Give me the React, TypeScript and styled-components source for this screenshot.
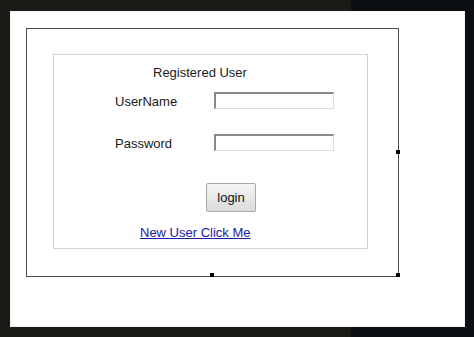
import React from "react";
import styled, { createGlobalStyle } from "styled-components";

const Global = createGlobalStyle`
  html, body { margin: 0; padding: 0; }
  body { font-family: "Liberation Sans", Arial, sans-serif; }
`;

const Screen = styled.div`
  width: 474px;
  height: 337px;
  box-sizing: border-box;
  padding: 11px 9px 10px 10px;
  background: linear-gradient(to right, #1b1b15 0, #1b1b15 351px, #0c0f11 351px, #0c0f11 100%);
  display: flex;
`;

const Panel = styled.div`
  width: 455px;
  height: 316px;
  background: #ffffff;
  box-shadow: inset 0 0 0 1px #f4f4f4;
  padding: 17px 0 0 16px;
  box-sizing: border-box;
`;

const Frame = styled.div`
  position: relative;
  width: 373px;
  height: 249px;
  box-sizing: border-box;
  border: 1px solid #4a4a4a;
  padding: 25px 0 0 26px;
`;

const Handle = styled.span<{ $x: number; $y: number }>`
  position: absolute;
  width: 4px;
  height: 4px;
  background: #000;
  left: ${(p) => p.$x}px;
  top: ${(p) => p.$y}px;
`;

const Box = styled.div`
  width: 315px;
  height: 195px;
  box-sizing: border-box;
  border: 1px solid #d2d2d2;
  display: flex;
  flex-direction: column;
  font-size: 13px;
  line-height: 15px;
  color: #1a1a1a;
`;

const Title = styled.div`
  margin: 10px 0 0 99px;
`;

const Row = styled.div<{ $gap: number }>`
  display: grid;
  grid-template-columns: 99px 120px;
  align-items: center;
  margin: ${(p) => p.$gap}px 0 0 61px;
  height: 17px;
`;

const Label = styled.label`
  padding-top: 1px;
`;

const Field = styled.input`
  width: 120px;
  height: 17px;
  box-sizing: border-box;
  margin: 0;
  padding: 0 2px;
  border-style: solid;
  border-width: 2px 1px 1px 2px;
  border-color: #8a8a8a #dedede #dedede #8a8a8a;
  background: #fff;
  font: inherit;
  outline: none;
`;

const Button = styled.button`
  margin: 32px 0 0 152px;
  width: 50px;
  height: 29px;
  box-sizing: border-box;
  border: 1px solid #a9a9a9;
  border-radius: 2px;
  background: linear-gradient(to bottom, #f6f6f6 0%, #e8e8e8 50%, #dcdcdc 100%);
  font-family: "Liberation Sans", Arial, sans-serif;
  font-size: 13px;
  color: #111;
  padding: 0;
`;

const Link = styled.a`
  margin: 13px 0 0 86px;
  align-self: flex-start;
  color: #1a1aa6;
  text-decoration: underline;
`;

export default function App() {
  return (
    <>
      <Global />
      <Screen>
        <Panel>
          <Frame>
            <Box>
              <Title>Registered User</Title>
              <Row $gap={12}>
                <Label>UserName</Label>
                <Field type="text" />
              </Row>
              <Row $gap={25}>
                <Label>Password</Label>
                <Field type="password" />
              </Row>
              <Button>login</Button>
              <Link href="#">New User Click Me</Link>
            </Box>
            <Handle $x={369} $y={121} />
            <Handle $x={183} $y={244} />
            <Handle $x={369} $y={244} />
          </Frame>
        </Panel>
      </Screen>
    </>
  );
}
